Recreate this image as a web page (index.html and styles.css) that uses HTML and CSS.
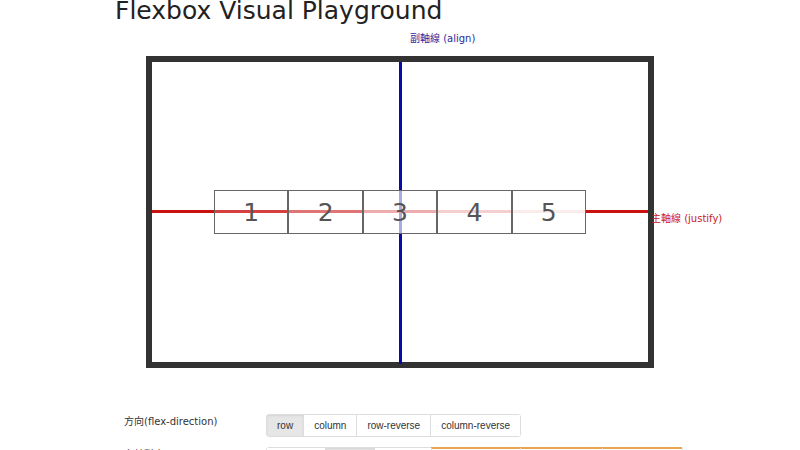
FILE: index.html
```html
<!DOCTYPE html>
<html lang="zh-Hant">
<head>
  <meta charset="UTF-8" />
  <meta name="viewport" content="width=device-width, initial-scale=1.0"/>
  <title>Flexbox Visual Playground</title>
  <link rel="stylesheet" href="styles.css">
</head>
<body>
  <div class="page">
    <h1>Flexbox Visual Playground</h1>

    <div class="board" id="board">
      <span class="axis axis-cross"></span>
      <span class="axis axis-main"></span>
      <span class="axis-label label-cross">副軸線 (align)</span>
      <span class="axis-label label-main">主軸線 (justify)</span>

      <div class="item">1</div>
      <div class="item">2</div>
      <div class="item">3</div>
      <div class="item">4</div>
      <div class="item">5</div>
    </div>

    <div class="controls">
      <div class="control">
        <label>方向(flex-direction)</label>
        <div class="group" data-prop="flexDirection">
          <button class="btn active">row</button>
          <button class="btn">column</button>
          <button class="btn">row-reverse</button>
          <button class="btn">column-reverse</button>
        </div>
      </div>

      <div class="control">
        <label>主軸對齊(justify-content)</label>
        <div class="group" data-prop="justifyContent">
          <button class="btn">flex-start</button>
          <button class="btn active">center</button>
          <button class="btn">flex-end</button>
          <button class="btn accent">space-between</button>
          <button class="btn accent">space-around</button>
          <button class="btn accent">space-evenly</button>
        </div>
      </div>
    </div>
  </div>

  <script>
    const board = document.getElementById('board');

    // Each button group sets one flex property on the board
    document.querySelectorAll('.group').forEach(function (group) {
      group.addEventListener('click', function (e) {
        if (!e.target.classList.contains('btn')) return;
        group.querySelectorAll('.btn').forEach(b => b.classList.remove('active'));
        e.target.classList.add('active');
        board.style[group.dataset.prop] = e.target.textContent;
      });
    });
  </script>
</body>
</html>
```

FILE: styles.css
```css
body {
  margin: 0;
  font-family: "DejaVu Sans", "Noto Sans CJK TC", sans-serif;
  color: #333;
  background: #fff;
}

.page {
  width: 570px;
  margin: 0 auto;
}

h1 {
  margin: 0;
  font-size: 25px;
  font-weight: normal;
  line-height: 22px;
  color: #222;
}

/* the flex container being played with */
.board {
  position: relative;
  box-sizing: border-box;
  width: 508px;
  height: 312px;
  margin: 34px auto 0;
  border: 6px solid #333;
  display: flex;
  flex-direction: row;
  justify-content: center;
  align-items: center;
}

.axis {
  position: absolute;
  display: block;
}

.axis-cross {
  top: 0;
  bottom: -2px;
  left: calc(50% - 1.5px);
  width: 3px;
  background: #0a0aa8;
}

.axis-main {
  left: 0;
  right: 0;
  top: calc(50% - 2px);
  height: 3px;
  background: #cc1111;
}

.axis-label {
  position: absolute;
  z-index: 2;
  font-size: 10px;
  line-height: 12px;
  white-space: nowrap;
}

.label-cross {
  left: calc(50% + 10px);
  top: -29px;
  color: #2a2a9c;
}

.label-main {
  left: calc(100% + 3px);
  top: calc(50% + 1px);
  color: #cc2020;
}

.item {
  position: relative;
  z-index: 1;
  box-sizing: border-box;
  flex: 0 0 15%;
  height: 44px;
  border: 1px solid #666;
  display: flex;
  align-items: center;
  justify-content: center;
  font-size: 25px;
  color: #555;
}

/* items get more opaque along the main axis */
.item:nth-of-type(1) { background: rgba(255,255,255,0.2); }
.item:nth-of-type(2) { background: rgba(255,255,255,0.42); }
.item:nth-of-type(3) { background: rgba(255,255,255,0.66); }
.item:nth-of-type(4) { background: rgba(255,255,255,0.8); }
.item:nth-of-type(5) { background: rgba(255,255,255,0.92); }

.controls {
  margin-top: 46px;
}

.control {
  display: grid;
  grid-template-columns: 142px auto;
  align-items: start;
  padding-left: 9px;
  margin-bottom: 10px;
}

.control label {
  font-size: 10px;
  line-height: 15px;
  color: #333;
}

.group {
  display: inline-flex;
  justify-self: start;
  border: 1px solid #ddd;
  border-radius: 3px;
}

.btn {
  font-family: "Liberation Sans", Arial, sans-serif;
  font-size: 10px;
  line-height: 21px;
  padding: 0 10px;
  margin: 0;
  color: #333;
  background: #fff;
  border: none;
  border-left: 1px solid #ddd;
  cursor: pointer;
}

.btn:first-child {
  border-left: none;
}

.btn.active {
  background: #e6e6e6;
  box-shadow: inset 0 1px 2px rgba(0,0,0,0.08);
}

.btn.accent {
  box-shadow: 0 -1px 0 #e8a54e, inset 0 1px 0 #e8a54e;
}
```
